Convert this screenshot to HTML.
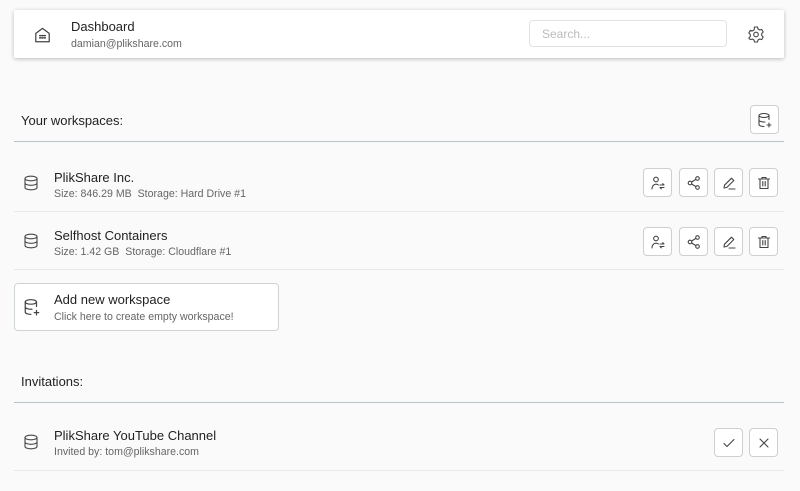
<!DOCTYPE html>
<html><head><style>
*{box-sizing:border-box;margin:0;padding:0}
body{width:800px;height:491px;background:#fafafa;font-family:"Liberation Sans",sans-serif;color:#222;position:relative;overflow:hidden}
.abs{position:absolute}
.hdr{left:14px;top:10px;width:770px;height:48px;background:#fff;box-shadow:0 1px 4px rgba(0,0,0,.25);border-radius:2px}
.t{font-size:13px;color:#222}
.s{font-size:10.6px;color:#666}
.btn{position:absolute;width:29px;height:29px;border:1px solid #cfcfcf;border-radius:4px;background:#fff;display:flex;align-items:center;justify-content:center}
.line{position:absolute;left:14px;width:770px;height:1px}
svg{fill:none;stroke:#444;stroke-width:1.1;stroke-linecap:round;stroke-linejoin:round}
</style></head><body>
<div class="abs hdr"></div>
<svg class="abs" style="left:33px;top:25px" width="19" height="19" viewBox="0 0 17 17"><path d="M2.5 15V7.5L8.5 3l6 4.5V15z"/><path d="M6 9.5h1M8 9.5h1M10 9.5h1M6 11.5h1M8 11.5h1M10 11.5h1" stroke-width="1.3"/></svg>
<div class="abs t" style="left:71px;top:19px">Dashboard</div>
<div class="abs s" style="left:71px;top:38px">damian@plikshare.com</div>
<div class="abs" style="left:529px;top:20px;width:198px;height:27px;border:1px solid #e2e2e2;border-radius:4px;background:#fff;font-size:12px;color:#bbb;padding:6px 12px">Search...</div>
<svg class="abs" style="left:747px;top:25px" width="18" height="18" viewBox="0 0 18 18"><path d="M7.5 2h3l.5 2 1.7 1 2-.6 1.5 2.6-1.5 1.5v2l1.5 1.5-1.5 2.6-2-.6-1.7 1-.5 2h-3l-.5-2-1.7-1-2 .6L1.8 13l1.5-1.5v-2L1.8 8l1.5-2.6 2 .6L7 5z"/><circle cx="9" cy="9.5" r="2.3"/></svg>

<div class="abs" style="left:21px;top:113px;font-size:13px">Your workspaces:</div>
<div class="btn" style="left:750px;top:105px"><svg width="16" height="16" viewBox="0 0 16 16"><ellipse cx="7" cy="3.5" rx="5" ry="2"/><path d="M2 3.5v9c0 1.1 2.2 2 5 2M12 3.5v4M2 8c0 1.1 2.2 2 5 2h1M12 11v4M10 13h4"/></svg></div>
<div class="line" style="top:141px;background:#b8c4c8"></div>

<svg class="abs" style="left:23px;top:175px" width="16" height="16" viewBox="0 0 16 16"><ellipse cx="8" cy="3.5" rx="6" ry="2.3"/><path d="M2 3.5v9c0 1.3 2.7 2.3 6 2.3s6-1 6-2.3v-9M2 8c0 1.3 2.7 2.3 6 2.3S14 9.3 14 8"/></svg>
<div class="abs t" style="left:54px;top:170px">PlikShare Inc.</div>
<div class="abs s" style="left:54px;top:188px">Size: 846.29 MB &nbsp;Storage: Hard Drive #1</div>
<div class="line" style="top:211px;background:#e8e8e8"></div>

<svg class="abs" style="left:23px;top:233px" width="16" height="16" viewBox="0 0 16 16"><ellipse cx="8" cy="3.5" rx="6" ry="2.3"/><path d="M2 3.5v9c0 1.3 2.7 2.3 6 2.3s6-1 6-2.3v-9M2 8c0 1.3 2.7 2.3 6 2.3S14 9.3 14 8"/></svg>
<div class="abs t" style="left:54px;top:228px">Selfhost Containers</div>
<div class="abs s" style="left:54px;top:246px">Size: 1.42 GB &nbsp;Storage: Cloudflare #1</div>
<div class="line" style="top:269px;background:#e8e8e8"></div>

<div class="abs" style="left:14px;top:283px;width:265px;height:48px;border:1px solid #cfd4d6;border-radius:4px;background:#fff"></div>
<svg class="abs" style="left:23px;top:298px" width="18" height="18" viewBox="0 0 16 16"><ellipse cx="7" cy="3.5" rx="5" ry="2"/><path d="M2 3.5v9c0 1.1 2.2 2 5 2M12 3.5v4M2 8c0 1.1 2.2 2 5 2h1M12 11v4M10 13h4"/></svg>
<div class="abs t" style="left:54px;top:292px">Add new workspace</div>
<div class="abs s" style="left:54px;top:311px">Click here to create empty workspace!</div>

<div class="abs" style="left:21px;top:374px;font-size:13px">Invitations:</div>
<div class="line" style="top:402px;background:#b8c4c8"></div>
<svg class="abs" style="left:23px;top:434px" width="16" height="16" viewBox="0 0 16 16"><ellipse cx="8" cy="3.5" rx="6" ry="2.3"/><path d="M2 3.5v9c0 1.3 2.7 2.3 6 2.3s6-1 6-2.3v-9M2 8c0 1.3 2.7 2.3 6 2.3S14 9.3 14 8"/></svg>
<div class="abs t" style="left:54px;top:428px">PlikShare YouTube Channel</div>
<div class="abs s" style="left:54px;top:446px">Invited by: tom@plikshare.com</div>
<div class="line" style="top:470px;background:#e8e8e8"></div>
<div class="btn" style="left:714px;top:428px"><svg width="14" height="14" viewBox="0 0 14 14"><path d="M2 7.5l3 3 7-7"/></svg></div>
<div class="btn" style="left:749px;top:428px"><svg width="14" height="14" viewBox="0 0 14 14"><path d="M3 3l8 8M11 3l-8 8"/></svg></div>

<div id="r1"></div>
<script>
var icons=[
'<svg width="16" height="16" viewBox="0 0 16 16"><circle cx="6" cy="4.5" r="2.3"/><path d="M2 14c0-3 1.8-4.8 4-4.8 1 0 1.8.3 2.4.8M10 10h4l-1.3-1.3M14 12.5h-4l1.3 1.3"/></svg>',
'<svg width="16" height="16" viewBox="0 0 16 16"><circle cx="11.5" cy="3.5" r="1.8"/><circle cx="4" cy="8" r="1.8"/><circle cx="11.5" cy="12.5" r="1.8"/><path d="M5.6 7l4.3-2.6M5.6 9l4.3 2.6"/></svg>',
'<svg width="16" height="16" viewBox="0 0 16 16"><path d="M3 13l.5-2.8 7-7 2.3 2.3-7 7zM8 14h6"/></svg>',
'<svg width="16" height="16" viewBox="0 0 16 16"><path d="M2.5 4h11M6 4V2.5h4V4M4 4v9.5h8V4M6.8 6.5v4.5M9.2 6.5v4.5"/></svg>'];
var xs=[643,679,714,749],h='';
[168,227].forEach(function(y){xs.forEach(function(x,i){h+='<div class="btn" style="left:'+x+'px;top:'+y+'px">'+icons[i]+'</div>';});});
document.getElementById('r1').innerHTML=h;
</script>
</body></html>
